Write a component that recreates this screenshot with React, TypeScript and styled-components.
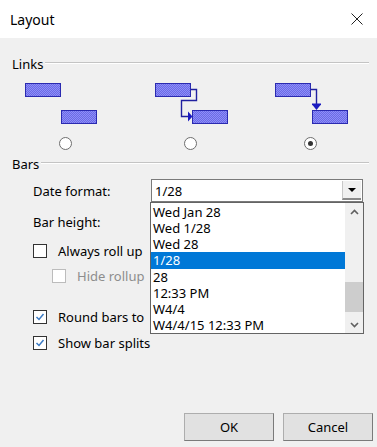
import styled, { createGlobalStyle } from 'styled-components'

const GlobalStyle = createGlobalStyle`
  html, body {
    margin: 0;
    padding: 0;
  }
  body {
    font-family: "Noto Sans", "Open Sans", sans-serif;
    font-size: 13px;
    color: #000;
    background: #f0f0f0;
  }
`

const Dialog = styled.div`
  width: 377px;
  height: 447px;
  display: flex;
  flex-direction: column;
  background: #f0f0f0;
  overflow: hidden;
`

const TitleBar = styled.div`
  height: 38px;
  flex: none;
  background: #fff;
  display: flex;
  align-items: center;
  justify-content: space-between;
  padding: 0 14px 0 10px;
  font-size: 14px;
`

const Body = styled.div`
  flex: 1;
  display: flex;
  flex-direction: column;
  padding: 18px 8px 0 12px;
`

const GroupHeading = styled.div<{ $top?: number }>`
  display: flex;
  align-items: center;
  height: 16px;
  line-height: 16px;
  margin-top: ${(p) => p.$top ?? 0}px;

  &::after {
    content: '';
    flex: 1;
    margin-left: 2px;
    margin-top: -2px;
    border-top: 1px solid #c4c4c4;
    border-bottom: 1px solid #fff;
  }
`

const LinksRow = styled.div`
  display: grid;
  grid-template-columns: 130px 120px 75px;
  padding-left: 13px;
  margin-top: 10px;
`

const LinkCell = styled.div`
  display: flex;
  flex-direction: column;
  align-items: center;
  width: 75px;
  gap: 12px;
`

const Radio = styled.span<{ $checked?: boolean; $shift?: number }>`
  width: 13px;
  height: 13px;
  box-sizing: border-box;
  border-radius: 50%;
  border: 1px solid #6e6e6e;
  background: #fff;
  display: flex;
  align-items: center;
  justify-content: center;
  margin-left: ${(p) => (p.$shift ?? 0) * 2}px;

  &::after {
    content: '';
    width: 5px;
    height: 5px;
    border-radius: 50%;
    background: ${(p) => (p.$checked ? '#333' : 'transparent')};
  }
`

const Row = styled.div<{ $top: number; $indent?: number; $h?: number }>`
  display: flex;
  align-items: center;
  height: ${(p) => p.$h ?? 16}px;
  margin-top: ${(p) => p.$top}px;
  padding-left: ${(p) => p.$indent ?? 21}px;
`

const FieldLabel = styled.span`
  width: 118px;
`

const SelectWrap = styled.div`
  position: relative;
  width: 212px;
  height: 23px;
  box-sizing: border-box;
  border: 1px solid #7a7a7a;
  background: #fff;
  display: flex;
  align-items: center;
  padding-left: 3px;
`

const SelectValue = styled.span`
  flex: 1;
`

const ArrowButton = styled.span`
  width: 19px;
  height: 19px;
  margin-right: 1px;
  box-sizing: border-box;
  background: #f0f0f0;
  border-left: 1px solid #c8c8c8;
  border-bottom: 2px solid #8a8a8a;
  display: flex;
  align-items: center;
  justify-content: center;

  &::after {
    content: '';
    border-left: 4px solid transparent;
    border-right: 4px solid transparent;
    border-top: 4px solid #000;
  }
`

const DropList = styled.div`
  position: absolute;
  top: 22px;
  left: -2px;
  width: 214px;
  height: 132px;
  box-sizing: border-box;
  border: 1px solid #646464;
  background: #fff;
  display: flex;
  z-index: 2;
`

const Options = styled.div`
  flex: 1;
  display: flex;
  flex-direction: column;
  padding-top: 1px;
`

const Option = styled.div<{ $selected?: boolean }>`
  height: 16.2px;
  line-height: 16px;
  padding-left: 2px;
  background: ${(p) => (p.$selected ? '#0078d7' : 'transparent')};
  color: ${(p) => (p.$selected ? '#fff' : '#000')};
  white-space: nowrap;
`

const Scrollbar = styled.div`
  width: 18px;
  background: #f0f0f0;
  display: flex;
  flex-direction: column;
  align-items: center;
`

const ScrollArrow = styled.span`
  height: 17px;
  display: flex;
  align-items: center;
  justify-content: center;
  color: #606060;
`

const ScrollTrack = styled.div`
  flex: 1;
  width: 100%;
  display: flex;
  flex-direction: column;
  padding-top: 62px;
`

const Thumb = styled.div`
  width: 100%;
  height: 30px;
  background: #cdcdcd;
`

const CheckBox = styled.span<{ $checked?: boolean; $disabled?: boolean }>`
  width: 14px;
  height: 14px;
  box-sizing: border-box;
  border: 1px solid ${(p) => (p.$disabled ? '#bcbcbc' : '#333')};
  background: #fff;
  margin-right: 11px;
  flex: none;
  display: flex;
  align-items: center;
  justify-content: center;
`

const CheckText = styled.span<{ $disabled?: boolean }>`
  color: ${(p) => (p.$disabled ? '#8d8d8d' : '#000')};
  white-space: nowrap;
`

const Footer = styled.div`
  margin-top: auto;
  margin-right: -8px;
  display: flex;
  justify-content: flex-end;
  gap: 9px;
  padding: 0 4px 6px 0;
`

const Button = styled.button`
  width: 90px;
  height: 28px;
  font-family: inherit;
  font-size: 13px;
  background: #e1e1e1;
  border: 1px solid #adadad;
  border-right-color: #7a7a7a;
  border-bottom-color: #7a7a7a;
  padding: 0;
  color: #000;
`

const barFill = 'url(#dither)'

const Bar = ({ x, y }: { x: number; y: number }) => (
  <rect x={x} y={y} width={35} height={13} fill={barFill} stroke="#2a2ab0" strokeWidth={1} />
)

const Pattern = () => (
  <defs>
    <pattern id="dither" width="2" height="2" patternUnits="userSpaceOnUse">
      <rect width="2" height="2" fill="#8e8ef8" />
      <rect width="1" height="1" fill="#6a6ae6" />
      <rect x="1" y="1" width="1" height="1" fill="#6a6ae6" />
    </pattern>
  </defs>
)

const NoLink = () => (
  <svg width="75" height="43" viewBox="0 0 75 43">
    <Pattern />
    <Bar x={0.5} y={1.5} />
    <Bar x={36.5} y={28.5} />
  </svg>
)

const SideLink = () => (
  <svg width="75" height="43" viewBox="0 0 75 43">
    <Pattern />
    <Bar x={0.5} y={1.5} />
    <polyline points="36,7.5 41.5,7.5 41.5,18.5 26.5,18.5 26.5,34.5 33,34.5" fill="none" stroke="#2020a0" strokeWidth={1.4} />
    <polygon points="33,29.5 37.5,34.5 33,39.5" fill="#1a1ac0" />
    <Bar x={37.5} y={28.5} />
  </svg>
)

const TopLink = () => (
  <svg width="75" height="43" viewBox="0 0 75 43">
    <Pattern />
    <Bar x={0.5} y={1.5} />
    <polyline points="36,7.5 41.5,7.5 41.5,23" fill="none" stroke="#2020a0" strokeWidth={1.4} />
    <rect x="37" y="21.5" width="9" height="1.6" fill="#1a1ac0" />
    <polygon points="37.5,23 45.5,23 41.5,28" fill="#1a1ac0" />
    <Bar x={37.5} y={28.5} />
  </svg>
)

const Tick = () => (
  <svg width="10" height="10" viewBox="0 0 10 10">
    <polyline points="1.5,5 4,7.5 8.5,2" fill="none" stroke="#3a7ac4" strokeWidth={1.5} />
  </svg>
)

const Chevron = ({ up }: { up?: boolean }) => (
  <svg width="9" height="6" viewBox="0 0 9 6">
    <polyline
      points={up ? '1,5 4.5,1.5 8,5' : '1,1 4.5,4.5 8,1'}
      fill="none"
      stroke="#606060"
      strokeWidth={1.6}
    />
  </svg>
)

const options = ['Wed Jan 28', 'Wed 1/28', 'Wed 28', '1/28', '28', '12:33 PM', 'W4/4', 'W4/4/15 12:33 PM']

export default function App() {
  return (
    <>
      <GlobalStyle />
      <Dialog>
        <TitleBar>
          <span>Layout</span>
          <svg width="12" height="12" viewBox="0 0 12 12">
            <path d="M0.5 0.5 L11.5 11.5 M11.5 0.5 L0.5 11.5" stroke="#222" strokeWidth={1} />
          </svg>
        </TitleBar>
        <Body>
          <GroupHeading>Links</GroupHeading>
          <LinksRow>
            <LinkCell>
              <NoLink />
              <Radio $shift={3} />
            </LinkCell>
            <LinkCell>
              <SideLink />
              <Radio $shift={-2} />
            </LinkCell>
            <LinkCell>
              <TopLink />
              <Radio $shift={-2} $checked />
            </LinkCell>
          </LinksRow>

          <GroupHeading $top={6}>Bars</GroupHeading>
          <Row $top={7} $h={23}>
            <FieldLabel>Date format:</FieldLabel>
            <SelectWrap>
              <SelectValue>1/28</SelectValue>
              <ArrowButton />
              <DropList>
                <Options>
                  {options.map((o) => (
                    <Option key={o} $selected={o === '1/28'}>
                      {o}
                    </Option>
                  ))}
                </Options>
                <Scrollbar>
                  <ScrollArrow>
                    <Chevron up />
                  </ScrollArrow>
                  <ScrollTrack>
                    <Thumb />
                  </ScrollTrack>
                  <ScrollArrow>
                    <Chevron />
                  </ScrollArrow>
                </Scrollbar>
              </DropList>
            </SelectWrap>
          </Row>
          <Row $top={8} $h={23}>
            <FieldLabel>Bar height:</FieldLabel>
          </Row>
          <Row $top={10}>
            <CheckBox />
            <CheckText>Always roll up</CheckText>
          </Row>
          <Row $top={9} $indent={40}>
            <CheckBox $disabled />
            <CheckText $disabled>Hide rollup</CheckText>
          </Row>
          <Row $top={25}>
            <CheckBox $checked>
              <Tick />
            </CheckBox>
            <CheckText>Round bars to</CheckText>
          </Row>
          <Row $top={10}>
            <CheckBox $checked>
              <Tick />
            </CheckBox>
            <CheckText>Show bar splits</CheckText>
          </Row>
          <Footer>
            <Button>OK</Button>
            <Button>Cancel</Button>
          </Footer>
        </Body>
      </Dialog>
    </>
  )
}
